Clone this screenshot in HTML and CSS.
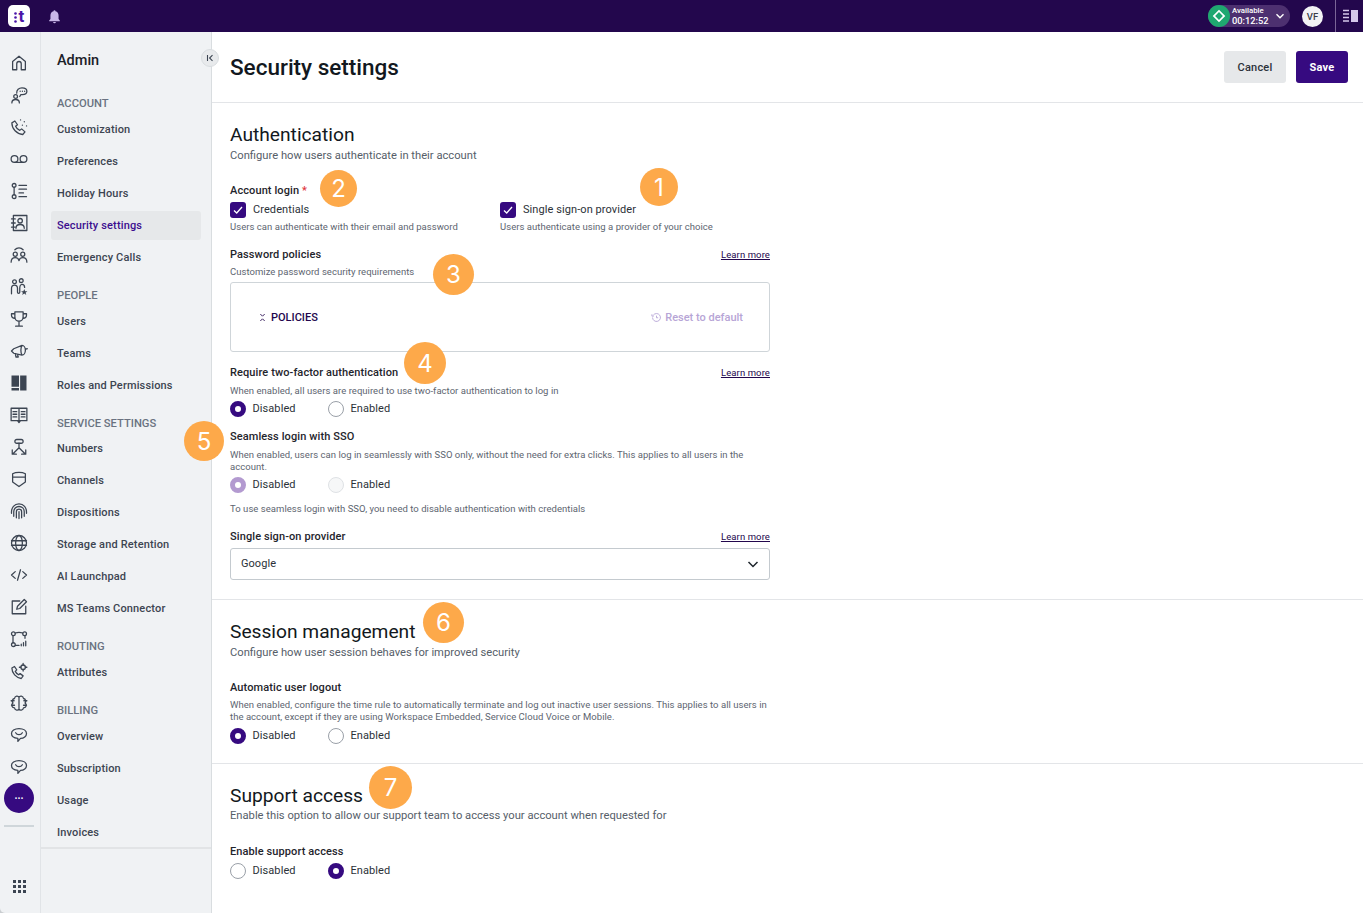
FILE: index.html
```html
<!DOCTYPE html>
<html lang="en">
<head>
<meta charset="utf-8">
<title>Security settings</title>
<link rel="stylesheet" href="styles.css">
</head>
<body>
<div class="app">
  <header class="topbar">
    <div class="logo"><svg class="logo-dots" viewBox="0 0 3 11"><circle cx="1.500" cy="1.500" r="1.300"/><circle cx="1.500" cy="5.500" r="1.300"/><circle cx="1.500" cy="9.500" r="1.300"/></svg><span class="logo-t">t</span></div>
    <svg class="bell" viewBox="0 0 24 24"><path d="M12 2a1.600 1.600 0 0 1 1.600 1.700C16.800 4.400 18.500 7 18.500 10.500V16l2 2.500v1H3.500v-1l2-2.500v-5.500C5.500 7 7.200 4.400 10.400 3.700A1.600 1.600 0 0 1 12 2zM9.800 20.800h4.400a2.200 2.200 0 0 1-4.400 0z"/></svg>
    <div class="topbar-right">
      <div class="status">
        <span class="status-dot"><svg viewBox="0 0 16 16"><rect x="4.400" y="4.400" width="7.200" height="7.200" transform="rotate(45 8 8)"/></svg></span>
        <span class="status-text"><span class="status-label">Available</span><span class="status-time">00:12:52</span></span>
        <svg class="status-chev" viewBox="0 0 12 12"><path d="M2.500 4.300 6 7.800l3.500-3.500"/></svg>
      </div>
      <div class="avatar">VF</div>
      <div class="panel-toggle">
        <svg viewBox="0 0 16 14"><path class="pt-lines" d="M0 1.500h6M0 5h6M0 8.500h6M0 12h6"/><rect class="pt-box" x="8" y="1" width="7" height="12"/></svg>
      </div>
    </div>
  </header>

  <div class="body">
    <nav class="rail">
      <ul class="rail-list">
        <li class="rail-item"><svg class="ri" viewBox="0 0 24 24"><path d="M3.500 21V10L12 3l8.500 7v11h-5.500v-8a3 3 0 0 0-6 0v8z"/></svg></li>
        <li class="rail-item"><svg class="ri" viewBox="0 0 24 24"><circle cx="7.500" cy="14" r="2.500"/><path d="M2.500 22.500c0-3 2-4.500 5-4.500s5 1.500 5 4.500M9 9.500C8.500 5 12 2.500 16 2.500s6.500 2 6.500 4.500-2.500 4.500-6 4.500h-2l-1.500 2.500M13.500 7h.1M16.500 7h.1M19.500 7h.1"/></svg></li>
        <li class="rail-item"><svg class="ri" viewBox="0 0 24 24"><path d="M2.500 6.500c0 8 6.500 15 14.500 15.500l3-3.500-4.500-4-2.500 2c-2.500-1-4.500-3-5.500-5.500l2.500-2-3.500-5zM14 2.500h.1M19 5h.1M22 10.500h.1M16.500 9.500h.1"/></svg></li>
        <li class="rail-item"><svg class="ri" viewBox="0 0 24 24"><circle cx="6" cy="12" r="4.500"/><circle cx="18" cy="12" r="4.500"/><path d="M6 16.500h12"/></svg></li>
        <li class="rail-item"><svg class="ri" viewBox="0 0 24 24"><circle cx="5.500" cy="4.500" r="2.500"/><circle cx="5.500" cy="19.500" r="2.500"/><path d="M5.500 7v10M12 4.500h10M12 9.500h10M12 14.500h6M12 19.500h10"/></svg></li>
        <li class="rail-item"><svg class="ri" viewBox="0 0 24 24"><path d="M4.500 2h18v20h-18zM2 6.500h5M2 12h5M2 17.500h5"/><circle cx="13.500" cy="9" r="3"/><path d="M8 19c0-3.500 2.500-5 5.500-5s5.500 1.500 5.500 5"/></svg></li>
        <li class="rail-item"><svg class="ri" viewBox="0 0 24 24"><path d="M6.500 5c3-3.500 8-3.500 11 0"/><circle cx="7" cy="11" r="2.700"/><circle cx="17" cy="11" r="2.700"/><path d="M1.500 21.500c0-4 2-6 5.500-6 2.500 0 4.500 1.500 5 4 .5-2.500 2.500-4 5-4 3.500 0 5.500 2 5.500 6"/></svg></li>
        <li class="rail-item"><svg class="ri" viewBox="0 0 24 24"><circle cx="6" cy="5" r="2.500"/><circle cx="15" cy="3.500" r="2.500"/><path d="M2 21v-7c0-3 1.500-4.500 4-4.500s4 1.500 4 4.500v5c0 2 3 2 3 0v-5c0-3 1-5.500 3-5.500s3.500 1.500 3.500 4"/><path class="fill" d="m19 14.500 1.200 3h3l-2.400 2 .9 3-2.700-1.800-2.700 1.800.9-3-2.400-2h3z"/></svg></li>
        <li class="rail-item"><svg class="ri" viewBox="0 0 24 24"><path d="M6.500 2.500h11V9c0 3.500-2.500 6-5.500 6S6.500 12.500 6.500 9zM6.500 5H2v2c0 2.500 2 4 5 4.500M17.500 5H22v2c0 2.500-2 4-5 4.500M12 15v6M7.500 21.500h9"/></svg></li>
        <li class="rail-item"><svg class="ri" viewBox="0 0 24 24"><path d="M2 12l3-3 11-4.500c2.500 0 4.500 3 4.500 6.500S18.500 17.500 16 17.500L5 15zM7 15.500 8 20h3l-1-3.500M16 4.500c-2 3-2 10 0 13M20.500 9.500 23 9"/></svg></li>
        <li class="rail-item"><svg class="ri" viewBox="0 0 24 24"><path class="solid" d="M2 2h10v15H2zM2 18.500h10V22H2zM13.500 2H22v20h-8.500z"/></svg></li>
        <li class="rail-item"><svg class="ri" viewBox="0 0 24 24"><path d="M1.500 3h10.500v16.500H1.500zM12 3h10.500v16.500H12zM10 19.500 12 22l2-2.500M4 7.500h5M4 11h5M4 14.500h5M15 7.500h5M15 11h5M15 14.500h5"/></svg></li>
        <li class="rail-item"><svg class="ri" viewBox="0 0 24 24"><rect x="6.500" y="2" width="11" height="5" rx="2.500"/><path d="M12 7v6M12 13 4 21M12 13l8 8M3 16v5.500h5.500M21 16v5.500h-5.500"/></svg></li>
        <li class="rail-item"><svg class="ri" viewBox="0 0 24 24"><path d="M3.500 5C8 2.500 16 2.500 20.500 5v11L12 22l-8.500-6zM3.500 9.500h17"/></svg></li>
        <li class="rail-item"><svg class="ri" viewBox="0 0 24 24"><path d="M2 15C1.500 7 6 2.500 12 2.500S22.500 7 22 15M5 19v-6c0-4 3-7 7-7s7 3 7 7v6M8.500 21v-8c0-2 1.500-3.500 3.500-3.500s3.500 1.500 3.500 3.500v8M12 13v9"/></svg></li>
        <li class="rail-item"><svg class="ri" viewBox="0 0 24 24"><circle cx="12" cy="12" r="10"/><ellipse cx="12" cy="12" rx="4.500" ry="10"/><path d="M2 9h20M2 15h20"/></svg></li>
        <li class="rail-item"><svg class="ri" viewBox="0 0 24 24"><path d="M7 7.500 2 12l5 4.500M17 7.500l5 4.500-5 4.500M14 5 10 19"/></svg></li>
        <li class="rail-item"><svg class="ri" viewBox="0 0 24 24"><path d="M13 4H3v17h18V11M9 15l1-4 9-9 3 3-9 9z"/></svg></li>
        <li class="rail-item"><svg class="ri" viewBox="0 0 24 24"><circle cx="4.500" cy="5" r="2.500"/><circle cx="19.500" cy="5" r="2.500"/><circle cx="4.500" cy="19.500" r="2.500"/><path d="M7 4c3-1 7-1 10 0M4 7.500v9.500M20 8v3M7 20.500h5M15 21v-2M18 21v-4M21 21v-6"/></svg></li>
        <li class="rail-item"><svg class="ri" viewBox="0 0 24 24"><path d="M2.500 8c0 7 5.500 13 12.500 14l2.500-3.500-4-3-2 1.500c-2-1-3.500-2.500-4.500-4.500l2-2-3-4.500z"/><circle cx="17.500" cy="7" r="3"/><path d="M17.500 2v2M17.500 10v2M12.500 7h2M20.500 7h2"/></svg></li>
        <li class="rail-item"><svg class="ri" viewBox="0 0 24 24"><path d="M12 4v17M12 4.500C11 2 6.500 2 6 6 3 6.500 2 10 4 12c-3 2-2 6 2 6.500 .5 3.500 5 4 6 1.500M12 4.500C13 2 17.500 2 18 6c3 .5 4 4 2 6 3 2 2 6-2 6.500-.5 3.500-5 4-6 1.500M1.500 9h4M22.500 9h-4M2 15h4M22 15h-4"/></svg></li>
        <li class="rail-item"><svg class="ri" viewBox="0 0 24 24"><path d="M12 3.500c6 0 10 2.800 10 6.500s-3.500 6.500-8 6.500l-3.500 4v-4C5 16 2 13.500 2 10s4-6.500 10-6.500zM7.500 9c2 3.500 7 3.500 9 0"/></svg></li>
        <li class="rail-item"><svg class="ri" viewBox="0 0 24 24"><path d="M12 3.500c6 0 10 2.800 10 6.500s-3.500 6.500-8 6.500l-3.500 4v-4C5 16 2 13.500 2 10s4-6.500 10-6.500zM7.500 9c2 3.500 7 3.500 9 0"/></svg></li>
        <li class="rail-more"><span class="more-btn">···</span></li>
      </ul>
      <div class="rail-sep"></div>
      <svg class="rail-grid" viewBox="0 0 13 13"><path d="M0 0h3v3H0zM5 0h3v3H5zM10 0h3v3h-3zM0 5h3v3H0zM5 5h3v3H5zM10 5h3v3h-3zM0 10h3v3H0zM5 10h3v3H5zM10 10h3v3h-3z"/></svg>
    </nav>

    <aside class="sidebar">
      <h2 class="side-title">Admin</h2>
      <div class="side-scroll">
        <section class="nav-group">
          <h3 class="nav-head">ACCOUNT</h3>
          <a class="nav-item">Customization</a>
          <a class="nav-item">Preferences</a>
          <a class="nav-item">Holiday Hours</a>
          <a class="nav-item is-active">Security settings</a>
          <a class="nav-item">Emergency Calls</a>
        </section>
        <section class="nav-group">
          <h3 class="nav-head">PEOPLE</h3>
          <a class="nav-item">Users</a>
          <a class="nav-item">Teams</a>
          <a class="nav-item">Roles and Permissions</a>
        </section>
        <section class="nav-group">
          <h3 class="nav-head">SERVICE SETTINGS</h3>
          <a class="nav-item">Numbers</a>
          <a class="nav-item">Channels</a>
          <a class="nav-item">Dispositions</a>
          <a class="nav-item">Storage and Retention</a>
          <a class="nav-item">AI Launchpad</a>
          <a class="nav-item">MS Teams Connector</a>
        </section>
        <section class="nav-group">
          <h3 class="nav-head">ROUTING</h3>
          <a class="nav-item">Attributes</a>
        </section>
        <section class="nav-group">
          <h3 class="nav-head">BILLING</h3>
          <a class="nav-item">Overview</a>
          <a class="nav-item">Subscription</a>
          <a class="nav-item">Usage</a>
          <a class="nav-item">Invoices</a>
        </section>
      </div>
    </aside>

    <main class="main">
      <div class="page-head">
        <h1 class="page-title">Security settings</h1>
        <div class="page-actions">
          <button class="btn btn-ghost">Cancel</button>
          <button class="btn btn-primary">Save</button>
        </div>
      </div>

      <section class="section sec-auth">
        <h2 class="sec-title">Authentication</h2>
        <p class="sec-sub">Configure how users authenticate in their account</p>

        <div class="field f-login">
          <div class="label">Account login <span class="req">*</span></div>
          <div class="checks">
            <div class="check-col">
              <div class="check-row"><span class="checkbox"><svg viewBox="0 0 16 16"><path d="m4 8.500 2.700 2.500L12 5"/></svg></span><span class="opt">Credentials</span></div>
              <p class="desc d-check">Users can authenticate with their email and password</p>
            </div>
            <div class="check-col">
              <div class="check-row"><span class="checkbox"><svg viewBox="0 0 16 16"><path d="m4 8.500 2.700 2.500L12 5"/></svg></span><span class="opt">Single sign-on provider</span></div>
              <p class="desc d-check">Users authenticate using a provider of your choice</p>
            </div>
          </div>
        </div>

        <div class="field f-pass">
          <div class="label-row"><div class="label">Password policies</div><a class="learn">Learn more</a></div>
          <p class="desc d-pass">Customize password security requirements</p>
          <div class="policies">
            <span class="pol-left"><svg class="pol-ico" viewBox="0 0 8 10"><path d="M1.500 1 4 3.500 6.500 1M1.500 9 4 6.500 6.500 9"/></svg><span class="pol-name">POLICIES</span></span>
            <span class="pol-reset"><svg class="reset-ico" viewBox="0 0 12 12"><path d="M2.500 3.500A4.300 4.300 0 1 1 1.700 6M1 2.500v2h2M6 4v2.300h1.800"/></svg>Reset to default</span>
          </div>
        </div>

        <div class="field f-2fa">
          <div class="label-row"><div class="label">Require two-factor authentication</div><a class="learn">Learn more</a></div>
          <p class="desc d-r">When enabled, all users are required to use two-factor authentication to log in</p>
          <div class="radios"><span class="radio-opt"><span class="radio on"></span><span class="opt">Disabled</span></span><span class="radio-opt"><span class="radio"></span><span class="opt">Enabled</span></span></div>
        </div>

        <div class="field f-sso">
          <div class="label">Seamless login with SSO</div>
          <p class="desc d-r">When enabled, users can log in seamlessly with SSO only, without the need for extra clicks. This applies to all users in the account.</p>
          <div class="radios"><span class="radio-opt"><span class="radio on off"></span><span class="opt">Disabled</span></span><span class="radio-opt"><span class="radio off"></span><span class="opt">Enabled</span></span></div>
          <p class="desc d-note">To use seamless login with SSO, you need to disable authentication with credentials</p>
        </div>

        <div class="field f-prov">
          <div class="label-row"><div class="label">Single sign-on provider</div><a class="learn">Learn more</a></div>
          <div class="select"><span>Google</span><svg viewBox="0 0 12 12"><path d="M1.500 4 6 8.500 10.500 4"/></svg></div>
        </div>
      </section>

      <section class="section sec-session">
        <h2 class="sec-title">Session management</h2>
        <p class="sec-sub">Configure how user session behaves for improved security</p>
        <div class="field f-auto">
          <div class="label">Automatic user logout</div>
          <p class="desc d-wide">When enabled, configure the time rule to automatically terminate and log out inactive user sessions. This applies to all users in the account, except if they are using Workspace Embedded, Service Cloud Voice or Mobile.</p>
          <div class="radios r-auto"><span class="radio-opt"><span class="radio on"></span><span class="opt">Disabled</span></span><span class="radio-opt"><span class="radio"></span><span class="opt">Enabled</span></span></div>
        </div>
      </section>

      <section class="section sec-support">
        <h2 class="sec-title">Support access</h2>
        <p class="sec-sub">Enable this option to allow our support team to access your account when requested for</p>
        <div class="field f-enable">
          <div class="label">Enable support access</div>
          <div class="radios"><span class="radio-opt"><span class="radio"></span><span class="opt">Disabled</span></span><span class="radio-opt"><span class="radio on"></span><span class="opt">Enabled</span></span></div>
        </div>
      </section>
    </main>
  </div>

  <button class="collapse"><svg viewBox="0 0 12 12"><path d="M3 2.500v7M9 2.500 5.500 6 9 9.500"/></svg></button>
  <span class="mark m1">1</span>
  <span class="mark m2">2</span>
  <span class="mark m3">3</span>
  <span class="mark m4">4</span>
  <span class="mark m5">5</span>
  <span class="mark m6">6</span>
  <span class="mark m7">7</span>
</div>
</body>
</html>
```

FILE: styles.css
```css
* { box-sizing: border-box; }
html, body { margin: 0; padding: 0; }
body { font-family: Roboto, "Liberation Sans", sans-serif; color: #1b2128; background: #fff; }
h1, h2, h3, p, ul { margin: 0; padding: 0; font-weight: 400; }
ul { list-style: none; }
.app { position: relative; width: 1363px; height: 913px; overflow: hidden; display: flex; flex-direction: column; }

/* top bar */
.topbar { height: 32px; flex: none; background: #23074d; display: flex; align-items: center; padding-left: 8px; }
.logo { width: 22px; height: 22px; background: #fff; border-radius: 5px; display: flex; align-items: center; justify-content: center; gap: 2px; }
.logo-dots { width: 3px; height: 11px; fill: #4a14a8; margin-top: 3px; }
.logo-t { color: #4a14a8; font: 700 17px/20px Roboto, sans-serif; }
.bell { width: 15px; height: 15px; fill: #c9b6e8; margin-left: 17px; }
.topbar-right { margin-left: auto; display: flex; align-items: center; height: 32px; }
.status { width: 82px; height: 22px; border-radius: 11px; background: #4d3070; display: flex; align-items: center; color: #fff; }
.status-dot { width: 22px; height: 22px; border-radius: 50%; background: #1fa870; display: flex; align-items: center; justify-content: center; flex: none; }
.status-dot svg { width: 16px; height: 16px; fill: none; stroke: #fff; stroke-width: 1.700; }
.status-text { display: flex; flex-direction: column; margin-left: 2px; line-height: 10px; width: 41px; flex: none; }
.status-label { font-size: 7.800px; font-weight: 500; line-height: 9px; }
.status-time { font-size: 9.300px; font-weight: 500; line-height: 11px; }
.status-chev { width: 12px; height: 12px; margin-left: 1px; fill: none; stroke: #fff; stroke-width: 1.400; }
.avatar { width: 21px; height: 21px; border-radius: 50%; background: #f3f3f5; color: #3a3f47; font-size: 9.500px; font-weight: 500; display: flex; align-items: center; justify-content: center; margin-left: 12px; }
.panel-toggle { width: 28px; height: 32px; margin-left: 12px; border-left: 1px solid #7a6597; display: flex; align-items: center; justify-content: flex-end; padding-right: 4px; }
.panel-toggle svg { width: 16px; height: 14px; }
.pt-lines { stroke: #d5c8ea; stroke-width: 1.300; fill: none; }
.pt-box { fill: #d5c8ea; }

.body { flex: 1; display: flex; min-height: 0; background: #c9cdd0; }

/* icon rail */
.rail { width: 41px; flex: none; background: #f0f2f4; border-right: 1px solid #e1e4e7; border-bottom-left-radius: 5px; display: flex; flex-direction: column; align-items: center; padding-top: 15px; }
.rail-list { display: flex; flex-direction: column; align-items: center; }
.rail-item { height: 32px; width: 32px; margin-right: 2px; display: flex; align-items: center; justify-content: center; }
.ri { width: 18px; height: 18px; fill: none; stroke: #3c4552; stroke-width: 1.700; stroke-linecap: round; stroke-linejoin: round; }
.ri .fill, .ri .solid { fill: #3c4552; stroke: none; }
.rail-more { margin-right: 2px; }
.more-btn { width: 30px; height: 30px; border-radius: 50%; background: #360a80; color: #fff; font-size: 10px; font-weight: 700; display: flex; align-items: center; justify-content: center; }
.rail-sep { width: 30px; height: 2px; background: #cfd6da; margin-top: 12px; margin-right: 2px; }
.rail-grid { width: 13px; height: 13px; fill: #3c4552; margin-top: 53px; margin-right: 2px; }

/* sidebar */
.sidebar { width: 171px; flex: none; background: #f0f2f4; border-right: 1px solid #d9dde0; display: flex; flex-direction: column; }
.side-title { font-size: 14.500px; font-weight: 500; line-height: 20px; color: #1b2128; padding: 19px 0 0 16px; height: 56px; flex: none; }
.side-scroll { height: 761px; flex: none; padding: 6px 10px 0; border-bottom: 2px solid #e2e4e6; }
.nav-group { margin-bottom: 12.500px; }
.nav-head { font-size: 11.200px; font-weight: 500; color: #6a7280; height: 19.250px; line-height: 19px; padding-left: 6px; }
.nav-item { display: flex; align-items: center; height: 32px; padding-left: 6px; font-size: 11px; font-weight: 500; color: #3d4551; border-radius: 3px; letter-spacing: .15px; }
.nav-item.is-active { background: #e6e8ea; color: #3d0f8f; height: 29px; margin: 1.500px 0; }

/* main */
.main { flex: 1; min-width: 0; background: #fff; }
.page-head { height: 71px; border-bottom: 1px solid #e3e5e8; display: flex; align-items: center; justify-content: space-between; padding: 0 15px 0 18px; }
.page-title { font-size: 22.500px; font-weight: 500; color: #121820; }
.page-actions { display: flex; gap: 10px; }
.btn { height: 32px; border: 0; border-radius: 3px; font: 500 11px Roboto, sans-serif; letter-spacing: .2px; }
.btn-ghost { width: 62px; background: #e6e8ea; color: #2c323a; }
.btn-primary { width: 52px; background: #360a80; color: #fff; font-weight: 700; }

.section { padding-left: 18px; border-bottom: 1px solid #e3e5e8; }
.sec-auth { height: 497px; padding-top: 20px; }
.sec-session { height: 164px; padding-top: 20px; }
.sec-support { border-bottom: 0; padding-top: 20px; }
.sec-title { font-size: 19.200px; line-height: 24px; color: #121820; }
.sec-sub { font-size: 11.200px; line-height: 14px; color: #565e69; margin-top: 2px; }
.sec-support .sec-sub { margin-top: 1px; }

.field { width: 540px; }
.f-login { margin-top: 21px; }
.f-pass { margin-top: 15px; }
.f-2fa { margin-top: 14px; }
.f-sso { margin-top: 13px; }
.f-prov { margin-top: 15px; }
.f-auto { margin-top: 21px; }
.f-enable { margin-top: 22px; }

.label { font-size: 11px; font-weight: 500; line-height: 14px; color: #1f252c; letter-spacing: .1px; }
.req { color: #e0343c; }
.label-row { display: flex; justify-content: space-between; align-items: center; }
.learn { font-size: 9.500px; line-height: 12px; color: #23074d; text-decoration: underline; letter-spacing: .1px; }
.desc { font-size: 9.500px; line-height: 12px; color: #5d6570; letter-spacing: .04px; }
.d-check { margin-top: 3px; }
.d-pass { margin-top: 4px; }
.d-r { margin-top: 5px; }
.d-note { margin-top: 10px; }
.d-wide { margin-top: 4px; }

.checks { display: flex; margin-top: 4px; }
.check-col { width: 270px; }
.check-row { display: flex; align-items: center; height: 16px; gap: 7px; }
.checkbox { width: 16px; height: 16px; background: #360a80; border-radius: 3px; display: flex; }
.checkbox svg { width: 16px; height: 16px; fill: none; stroke: #fff; stroke-width: 1.300; }
.opt { font-size: 11px; line-height: 16px; color: #2b3138; letter-spacing: .08px; }

.policies { margin-top: 4px; height: 70px; border: 1px solid #cfd5d9; border-radius: 3px; display: flex; align-items: center; justify-content: space-between; padding: 0 26px 0 28px; }
.pol-left { display: flex; align-items: center; gap: 5px; }
.pol-ico { width: 7px; height: 9px; fill: none; stroke: #23074d; stroke-width: 1; }
.pol-name { font-size: 11px; font-weight: 500; color: #23074d; }
.pol-reset { display: flex; align-items: center; gap: 3px; font-size: 11px; font-weight: 500; color: #b7a5d6; }
.reset-ico { width: 11px; height: 11px; fill: none; stroke: #b7a5d6; stroke-width: 1; }

.radios { display: flex; margin-top: 4px; height: 16px; }
.r-auto { margin-top: 5px; }
.radio-opt { display: flex; align-items: center; gap: 6.500px; width: 98px; }
.radio { width: 16px; height: 16px; border-radius: 50%; border: 1px solid #9aa0a8; background: #fff; flex: none; }
.radio.on { border: 5px solid #360a80; }
.radio.off { border-color: #dfe2e5; background: #f6f7f8; }
.radio.on.off { border: 5px solid #b39ad0; background: #fff; }

.select { margin-top: 4px; height: 32px; border: 1px solid #c4cacf; border-radius: 3px; display: flex; align-items: center; justify-content: space-between; padding: 0 10px; font-size: 11px; color: #2b3138; letter-spacing: .05px; }
.select span { margin-top: -2px; }
.select svg { width: 12px; height: 12px; fill: none; stroke: #1f252c; stroke-width: 1.500; }

/* overlays */
.collapse { position: absolute; left: 201px; top: 49px; width: 18px; height: 18px; border-radius: 50%; border: 1px solid #d9dde0; background: #e8eaec; padding: 0; display: flex; align-items: center; justify-content: center; }
.collapse svg { width: 10px; height: 10px; fill: none; stroke: #3c4552; stroke-width: 1.300; }
.mark { position: absolute; border-radius: 50%; background: #fda94a; color: #fff; font-family: Inter, Roboto, sans-serif; font-size: 24px; display: flex; align-items: center; justify-content: center; }
.m1 { left: 640px; top: 168px; width: 38px; height: 38px; }
.m2 { left: 320px; top: 170px; width: 37px; height: 37px; }
.m3 { left: 433px; top: 254px; width: 41px; height: 41px; }
.m4 { left: 404px; top: 342px; width: 42px; height: 42px; }
.m5 { left: 184px; top: 421px; width: 40px; height: 40px; }
.m6 { left: 423px; top: 602px; width: 41px; height: 41px; }
.m7 { left: 369px; top: 766px; width: 43px; height: 43px; }
```
